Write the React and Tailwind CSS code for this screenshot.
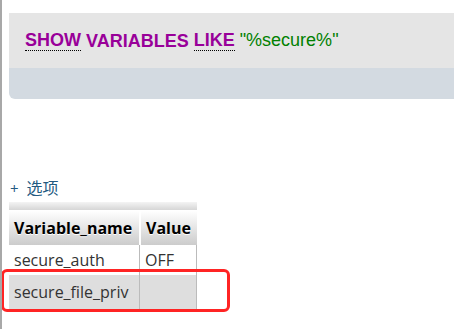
import React from 'react';

const App = () => {
  const rows = [
    { name: 'secure_auth', value: 'OFF', bg: 'bg-white', h: 'h-[30px]' },
    { name: 'secure_file_priv', value: '', bg: 'bg-[#dedede]', h: 'h-[34px]' },
  ];

  return (
    <div className="relative h-[329px] w-[454px] overflow-hidden bg-white border-l-2 border-[#a8a8a8] font-['Open_Sans','Noto_Sans_CJK_SC',sans-serif]">
      {/* SQL query box */}
      <div className="ml-[7px] mt-[13px] w-[460px] rounded-bl-[6px] overflow-hidden">
        <div className="h-[55px] bg-[#e5e5e5] flex items-center pl-4 text-[18px] font-['Liberation_Sans',Arial,sans-serif]">
          <span className="font-bold text-[#990099] border-b border-dotted border-black leading-[20px]">SHOW</span>
          <span className="font-bold text-[#990099] leading-[20px]">&nbsp;VARIABLES&nbsp;</span>
          <span className="font-bold text-[#990099] border-b border-dotted border-black leading-[20px]">LIKE</span>
          <span className="text-[#008000] leading-[20px] ml-[5px] mb-px">"%secure%"</span>
        </div>
        <div className="h-[31px] bg-[#d3dae1]" />
      </div>

      {/* options link */}
      <div className="mt-[79px] ml-[8px] flex items-center h-[20px] text-[#235a81]">
        <span className="text-[15px] leading-[20px]">+</span>
        <span className="ml-[8px] text-[16px] leading-[20px]">选项</span>
      </div>

      {/* result table */}
      <div className="ml-[7px] mt-[4px] w-[188px]">
        <div className="h-[8px] bg-gradient-to-b from-[#f4f4f4] to-[#d6d6d6]" />
        <div className="flex h-[34px] mt-px gap-[2px]">
          <div className="w-[130px] flex items-center pl-[5px] bg-gradient-to-b from-white to-[#cccccc] font-bold text-[16px] text-black [text-shadow:0_1px_0_#fff]">
            Variable_name
          </div>
          <div className="flex-1 flex items-center pl-[5px] bg-gradient-to-b from-white to-[#cccccc] font-bold text-[16px] text-black [text-shadow:0_1px_0_#fff]">
            Value
          </div>
        </div>
        {rows.map((r) => (
          <div key={r.name} className={`flex ${r.h} ${r.bg} text-[16px] text-[#333]`}>
            <div className="w-[131px] flex items-center pl-[5px] border-r border-[#bbbbbb]">{r.name}</div>
            <div className="flex-1 flex items-center pl-[5px] border-r border-[#bbbbbb]">{r.value}</div>
          </div>
        ))}
      </div>

      {/* red highlight annotation */}
      <div className="absolute left-[-1px] top-[269px] w-[229px] h-[43px] border-[3px] border-[#ff2424] rounded-[6px]" />
    </div>
  );
};

export default App;
